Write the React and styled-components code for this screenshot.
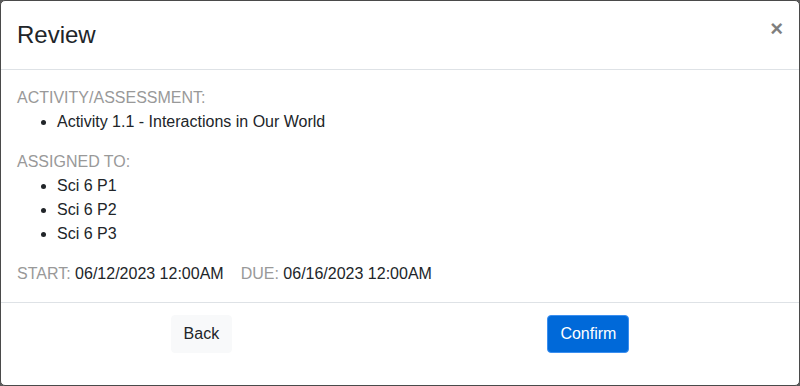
import React from "react";
import styled, { createGlobalStyle } from "styled-components";

const Global = createGlobalStyle`
  html, body { margin: 0; padding: 0; background: #5a5a5a; }
  body { font-family: "Liberation Sans", Arial, sans-serif; }
  * { box-sizing: border-box; }
`;

const Modal = styled.div`
  width: 800px;
  height: 386px;
  background: #fff;
  border: 1px solid #4a4a4a;
  border-radius: 5px;
  display: flex;
  flex-direction: column;
  overflow: hidden;
  color: #212529;
`;

const Header = styled.div`
  display: flex;
  align-items: flex-start;
  justify-content: space-between;
  padding: 16px 16px 16px 16px;
  border-bottom: 1px solid #dee2e6;
`;

const Title = styled.h4`
  margin: 0;
  font-size: 24px;
  font-weight: 400;
  line-height: 36px;
  color: #212529;
`;

const Close = styled.button`
  border: 0;
  background: transparent;
  padding: 0;
  margin: 0 0 0 0;
  font-family: "Liberation Sans", Arial, sans-serif;
  font-size: 22px;
  font-weight: 700;
  line-height: 24px;
  color: #000;
  opacity: 0.5;
  cursor: pointer;
`;

const Body = styled.div`
  padding: 16px 16px 16px 16px;
  font-size: 16px;
  line-height: 24px;
`;

const Label = styled.div`
  color: #999;
  text-transform: uppercase;
`;

const List = styled.ul`
  margin: 0 0 16px 0;
  padding-left: 40px;
  list-style: disc;
`;

const Item = styled.li``;

const Dates = styled.div`
  display: flex;
  gap: 17px;
`;

const DateEntry = styled.span``;

const DateLabel = styled.span`
  color: #999;
`;

const Footer = styled.div`
  border-top: 1px solid #dee2e6;
  padding: 12px 12px 31px 12px;
  display: flex;
  justify-content: space-around;
  align-items: center;
`;

const Button = styled.button`
  font-family: "Liberation Sans", Arial, sans-serif;
  font-size: 16px;
  line-height: 24px;
  padding: 6px 12px;
  border-radius: 4px;
  border: 1px solid ${(p) => (p.$primary ? "#3b8ff0" : "#f8f9fa")};
  background: ${(p) => (p.$primary ? "#0069d9" : "#f8f9fa")};
  color: ${(p) => (p.$primary ? "#fff" : "#212529")};
  cursor: pointer;
`;

export default function App() {
  return (
    <>
      <Global />
      <Modal>
        <Header>
          <Title>Review</Title>
          <Close aria-label="Close">×</Close>
        </Header>
        <Body>
          <Label>Activity/Assessment:</Label>
          <List>
            <Item>Activity 1.1 - Interactions in Our World</Item>
          </List>
          <Label>Assigned To:</Label>
          <List>
            <Item>Sci 6 P1</Item>
            <Item>Sci 6 P2</Item>
            <Item>Sci 6 P3</Item>
          </List>
          <Dates>
            <DateEntry>
              <DateLabel>START: </DateLabel>06/12/2023 12:00AM
            </DateEntry>
            <DateEntry>
              <DateLabel>DUE: </DateLabel>06/16/2023 12:00AM
            </DateEntry>
          </Dates>
        </Body>
        <Footer>
          <Button>Back</Button>
          <Button $primary>Confirm</Button>
        </Footer>
      </Modal>
    </>
  );
}
